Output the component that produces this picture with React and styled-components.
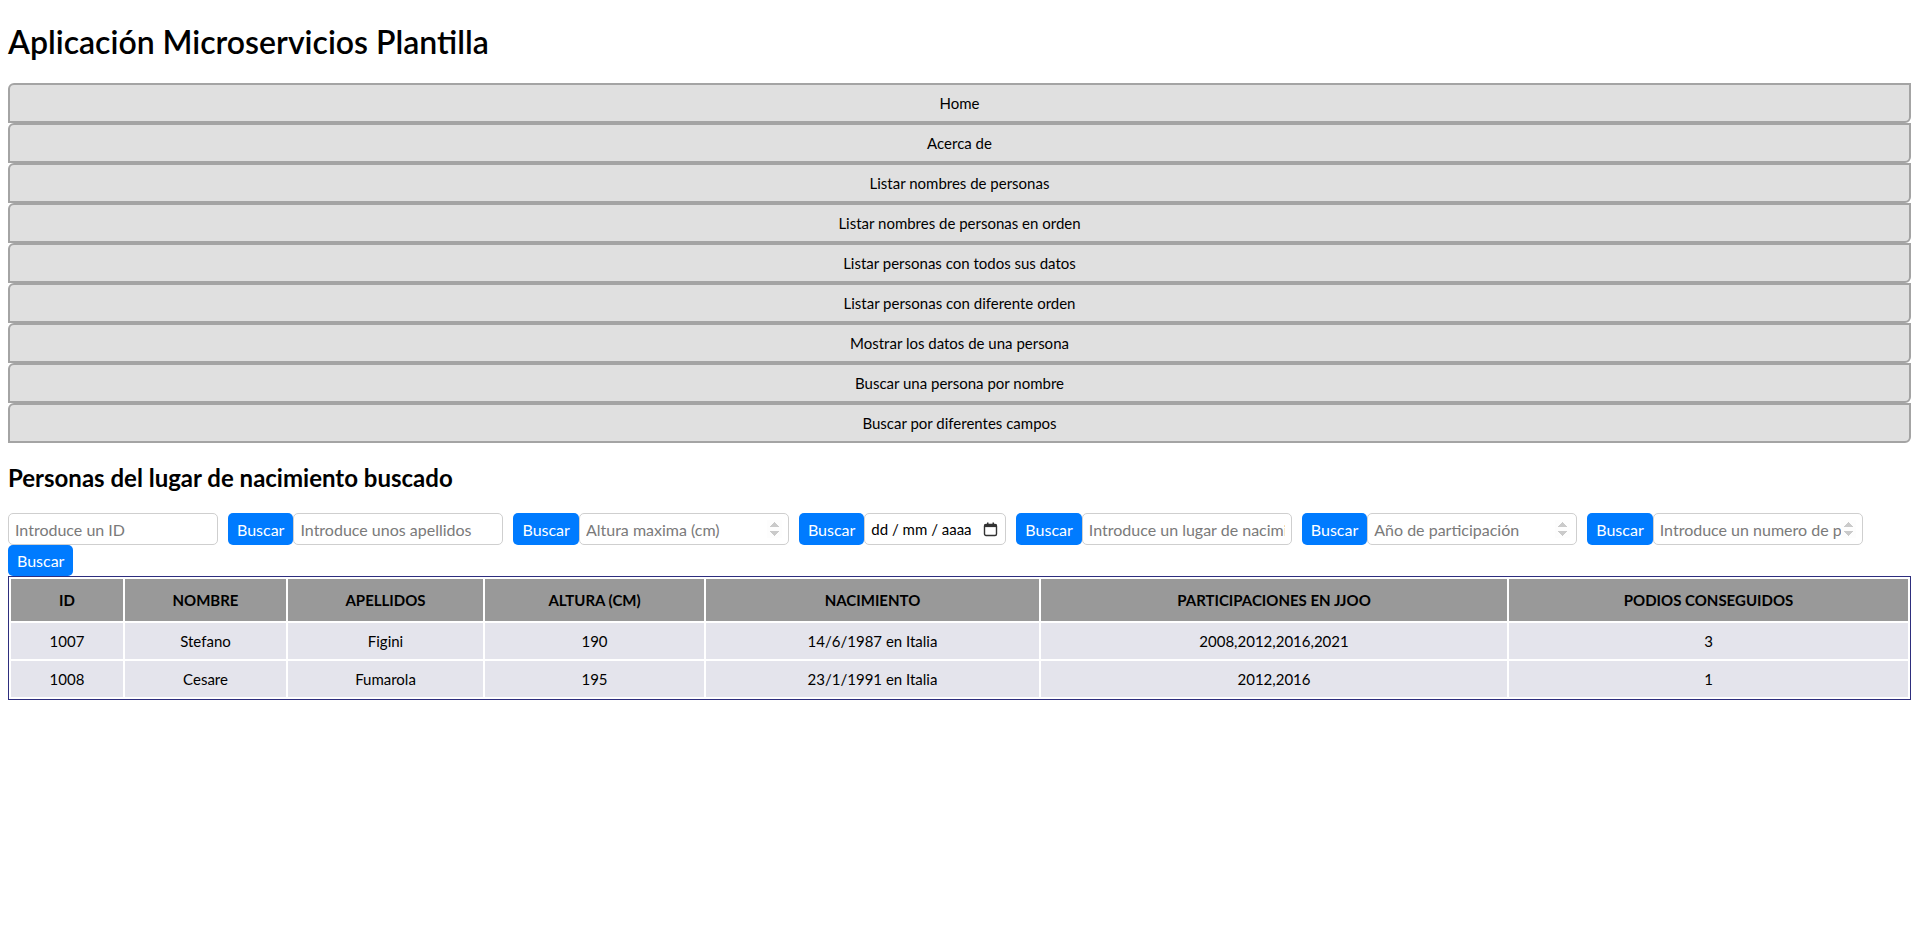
import React from "react";
import styled, { createGlobalStyle } from "styled-components";

const GlobalStyle = createGlobalStyle`
  * { box-sizing: border-box; }
  body {
    margin: 0;
    background: #fff;
    color: #000;
    font-family: Lato, "Noto Sans", sans-serif;
  }
`;

const Page = styled.div`
  padding: 0 8px;
`;

const Title = styled.h1`
  margin: 22px 0 21px;
  font-size: 32px;
  line-height: 40px;
  font-weight: 600;
`;

const Nav = styled.nav`
  display: flex;
  flex-direction: column;
`;

const NavButton = styled.button`
  display: block;
  width: 100%;
  height: 40px;
  background: #e0e0e0;
  border: 2px solid #a4a4a4;
  border-radius: 6px 0 6px 0;
  font-family: inherit;
  font-size: 15px;
  color: #000;
  cursor: pointer;
`;

const Subtitle = styled.h2`
  margin: 20px 0;
  font-size: 24px;
  line-height: 30px;
  font-weight: 700;
`;

const SearchBar = styled.div`
  display: flex;
  flex-wrap: wrap;
  align-items: flex-start;
`;

const Field = styled.input`
  width: ${(p) => p.$w || 210}px;
  height: 32px;
  margin-right: 10px;
  padding: 0 6px;
  border: 1px solid #cfcfcf;
  border-radius: 5px;
  font-family: inherit;
  font-size: 16px;
  color: #000;
  background: #fff;
  &::placeholder { color: #7a7a7a; }
  &::-webkit-inner-spin-button { opacity: 0.45; }
`;

const DateField = styled.div`
  display: flex;
  align-items: center;
  justify-content: space-between;
  width: 142px;
  height: 32px;
  margin-right: 10px;
  padding: 0 7px 0 6px;
  border: 1px solid #cfcfcf;
  border-radius: 5px;
  font-size: 15px;
  color: #000;
  background: #fff;
`;

const SearchButton = styled.button`
  height: ${(p) => (p.$wrapped ? 31 : 32)}px;
  padding: 0 9px;
  background: #007bff;
  border: none;
  border-radius: 5px;
  color: #fff;
  font-family: inherit;
  font-size: 16px;
  cursor: pointer;
`;

const Table = styled.table`
  width: 100%;
  table-layout: fixed;
  border: 1px solid #2e2e7e;
  border-spacing: 2px;
  font-size: 15px;
`;

const HeadCell = styled.th`
  width: ${(p) => p.$w}px;
  height: 42px;
  background: #999999;
  font-weight: 700;
  text-align: center;
`;

const Cell = styled.td`
  height: 36px;
  background: #e4e4ec;
  text-align: center;
`;

function CalendarIcon() {
  return (
    <svg width="15" height="15" viewBox="0 0 15 15" fill="none">
      <rect x="1.5" y="2.5" width="12" height="11" rx="1.5" stroke="#333" strokeWidth="1.4" />
      <rect x="1.5" y="2.5" width="12" height="2.6" fill="#333" />
      <rect x="4" y="0.5" width="1.5" height="3" fill="#333" />
      <rect x="9.5" y="0.5" width="1.5" height="3" fill="#333" />
    </svg>
  );
}

const links = [
  "Home",
  "Acerca de",
  "Listar nombres de personas",
  "Listar nombres de personas en orden",
  "Listar personas con todos sus datos",
  "Listar personas con diferente orden",
  "Mostrar los datos de una persona",
  "Buscar una persona por nombre",
  "Buscar por diferentes campos",
];

const columns = [
  { label: "ID", w: 112 },
  { label: "NOMBRE", w: 161 },
  { label: "APELLIDOS", w: 195 },
  { label: "ALTURA (CM)", w: 219 },
  { label: "NACIMIENTO", w: 333 },
  { label: "PARTICIPACIONES EN JJOO", w: 466 },
  { label: "PODIOS CONSEGUIDOS", w: 399 },
];

const personas = [
  ["1007", "Stefano", "Figini", "190", "14/6/1987 en Italia", "2008,2012,2016,2021", "3"],
  ["1008", "Cesare", "Fumarola", "195", "23/1/1991 en Italia", "2012,2016", "1"],
];

export default function App() {
  return (
    <Page>
      <GlobalStyle />
      <Title>Aplicación Microservicios Plantilla</Title>
      <Nav>
        {links.map((l) => (
          <NavButton key={l}>{l}</NavButton>
        ))}
      </Nav>

      <Subtitle>Personas del lugar de nacimiento buscado</Subtitle>

      <SearchBar>
        <Field type="text" placeholder="Introduce un ID" />
        <SearchButton>Buscar</SearchButton>
        <Field type="text" placeholder="Introduce unos apellidos" />
        <SearchButton>Buscar</SearchButton>
        <Field type="number" placeholder="Altura maxima (cm)" />
        <SearchButton>Buscar</SearchButton>
        <DateField>
          <span>dd / mm / aaaa</span>
          <CalendarIcon />
        </DateField>
        <SearchButton>Buscar</SearchButton>
        <Field type="text" placeholder="Introduce un lugar de nacimiento" />
        <SearchButton>Buscar</SearchButton>
        <Field type="number" placeholder="Año de participación" />
        <SearchButton>Buscar</SearchButton>
        <Field type="number" placeholder="Introduce un numero de podios" />
        <SearchButton $wrapped>Buscar</SearchButton>
      </SearchBar>

      <Table>
        <thead>
          <tr>
            {columns.map((c) => (
              <HeadCell key={c.label} $w={c.w}>
                {c.label}
              </HeadCell>
            ))}
          </tr>
        </thead>
        <tbody>
          {personas.map((row) => (
            <tr key={row[0]}>
              {row.map((v, i) => (
                <Cell key={i}>{v}</Cell>
              ))}
            </tr>
          ))}
        </tbody>
      </Table>
    </Page>
  );
}
